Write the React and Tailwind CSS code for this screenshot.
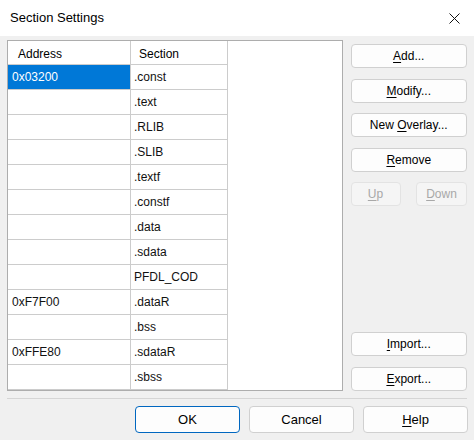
const rows = [
  { addr: "0x03200", sec: ".const", selected: true },
  { addr: "", sec: ".text" },
  { addr: "", sec: ".RLIB" },
  { addr: "", sec: ".SLIB" },
  { addr: "", sec: ".textf" },
  { addr: "", sec: ".constf" },
  { addr: "", sec: ".data" },
  { addr: "", sec: ".sdata" },
  { addr: "", sec: "PFDL_COD" },
  { addr: "0xF7F00", sec: ".dataR" },
  { addr: "", sec: ".bss" },
  { addr: "0xFFE80", sec: ".sdataR" },
  { addr: "", sec: ".sbss" },
];

// label with underlined access key
const Mn = ({ pre = "", k, post = "" }) => (
  <span>
    {pre}
    <span className="underline underline-offset-2">{k}</span>
    {post}
  </span>
);

const Btn = ({ children, className = "", disabled, primary }) => (
  <button
    className={
      "flex items-center justify-center rounded-[4px] border text-[12px] " +
      (disabled
        ? "bg-[#f5f5f5] border-[#e3e3e3] text-[#a8a8a8] "
        : primary
        ? "bg-[#fdfdfd] border-[#0067c0] text-black "
        : "bg-[#fdfdfd] border-[#d0d0d0] text-black ") +
      className
    }
  >
    {children}
  </button>
);

export default function App() {
  return (
    <div
      className="w-[474px] h-[440px] bg-[#f0f0f0] flex flex-col overflow-hidden"
      style={{ fontFamily: '"Liberation Sans", Arial, sans-serif' }}
    >
      {/* title bar */}
      <div className="h-[36px] bg-white flex items-center justify-between pl-[10px] pr-[14px] shrink-0">
        <span className="text-[13px] text-black">Section Settings</span>
        <svg width="11" height="11" viewBox="0 0 11 11">
          <path d="M0.5 0.5 L10.5 10.5 M10.5 0.5 L0.5 10.5" stroke="#111" strokeWidth="1" />
        </svg>
      </div>

      {/* body */}
      <div className="flex pl-[7px] pr-[7px] pt-[4px] gap-[8px]">
        <div className="w-[337px] h-[351px] bg-white border border-[#adadad] flex">
          <div className="flex flex-col">
            <div className="flex h-[24px] border-b border-[#cccccc] text-[12px] text-black">
              <div className="w-[123px] border-r border-[#cccccc] pl-[10px] pt-[3px] flex items-center">Address</div>
              <div className="w-[97px] border-r border-[#cccccc] pl-[8px] pt-[3px] flex items-center">Section</div>
            </div>
            {rows.map((r, i) => (
              <div key={i} className="flex h-[25px] border-b border-[#cccccc] text-[12px]">
                <div
                  className={
                    "w-[123px] border-r border-[#cccccc] pl-[4px] flex items-center " +
                    (r.selected ? "bg-[#0078d7] text-white" : "text-[#111]")
                  }
                >
                  {r.addr}
                </div>
                <div className="w-[97px] border-r border-[#cccccc] pl-[3px] flex items-center text-[#111]">
                  {r.sec}
                </div>
              </div>
            ))}
          </div>
        </div>

        <div className="w-[117px] flex flex-col pt-[4px]">
          <div className="flex flex-col gap-[10.5px]">
            <Btn className="h-[24px] w-full"><Mn k="A" post="dd..." /></Btn>
            <Btn className="h-[24px] w-full"><Mn k="M" post="odify..." /></Btn>
            <Btn className="h-[24px] w-full"><Mn pre="New " k="O" post="verlay..." /></Btn>
            <Btn className="h-[24px] w-full"><Mn k="R" post="emove" /></Btn>
            <div className="flex justify-between">
              <Btn disabled className="h-[24px] w-[50px]"><Mn k="U" post="p" /></Btn>
              <Btn disabled className="h-[24px] w-[51px]"><Mn k="D" post="own" /></Btn>
            </div>
          </div>
          <div className="flex-1" />
          <div className="flex flex-col gap-[11px]">
            <Btn className="h-[24px] w-full"><Mn k="I" post="mport..." /></Btn>
            <Btn className="h-[24px] w-full"><Mn k="E" post="xport..." /></Btn>
          </div>
        </div>
      </div>

      {/* separator */}
      <div className="mx-[7px] mt-[7px] h-[1px] bg-[#d5d5d5]" />

      {/* footer */}
      <div className="flex justify-end gap-[9px] pr-[6px] mt-[7px]">
        <Btn primary className="h-[27px] w-[105px] text-[13px]">OK</Btn>
        <Btn className="h-[27px] w-[105px] text-[13px]">Cancel</Btn>
        <Btn className="h-[27px] w-[105px] text-[13px]"><Mn k="H" post="elp" /></Btn>
      </div>
    </div>
  );
}
